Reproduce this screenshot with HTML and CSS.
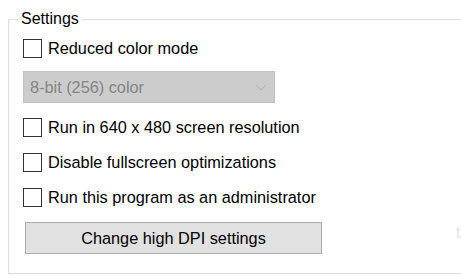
FILE: index.html
```html
<!DOCTYPE html>
<html lang="en">
<head>
    <meta charset="UTF-8">
    <meta name="viewport" content="width=device-width, initial-scale=1.0">
    <title>Compatibility Settings</title>
    <link rel="stylesheet" href="styles.css">
</head>
<body>

<fieldset class="group">
    <legend>Settings</legend>

    <!-- Reduced color -->
    <label class="row first">
        <span class="check"></span>
        <span>Reduced color mode</span>
    </label>

    <div class="combo">
        <span>8-bit (256) color</span>
        <svg class="chevron" width="12" height="7" viewBox="0 0 12 7">
            <polyline points="1,1 6,6 11,1" fill="none" stroke="#b4b4b4" stroke-width="1"/>
        </svg>
    </div>

    <!-- Other options -->
    <label class="row after-combo">
        <span class="check"></span>
        <span>Run in 640 x 480 screen resolution</span>
    </label>
    <label class="row">
        <span class="check"></span>
        <span>Disable fullscreen optimizations</span>
    </label>
    <label class="row">
        <span class="check"></span>
        <span>Run this program as an administrator</span>
    </label>

    <button class="btn">Change high DPI settings</button>
</fieldset>

<span class="cut">t</span>

</body>
</html>
```

FILE: styles.css
```css
html, body {
    margin: 0;
    padding: 0;
    background: #fff;
    overflow: hidden;
}
body {
    padding-top: 9px;
    font-family: "Liberation Sans", Arial, sans-serif;
    font-size: 16.3px;
    color: #000;
    position: relative;
    height: 276px;
    box-sizing: border-box;
}
.group {
    margin: 0 0 0 8px;
    padding: 10px 0 19px 14px;
    min-width: 0;
    border: 1px solid #dcdcdc;
    border-right: none;
    display: flex;
    flex-direction: column;
    align-items: flex-start;
}
.group legend {
    font-size: 16px;
    line-height: 20px;
    padding: 0 3px;
    margin-left: -5px;
}
.row {
    display: flex;
    align-items: center;
    gap: 6px;
    height: 19px;
    margin-top: 16px;
    white-space: nowrap;
}
.row.first {
    margin-top: 0;
}
.row.after-combo {
    margin-top: 15px;
}
.check {
    width: 17px;
    height: 17px;
    border: 1px solid #333;
    background: #fff;
}
.combo {
    margin-top: 13px;
    width: 237px;
    height: 30px;
    background: #cccccc;
    border: 1px solid #c2c2c2;
    color: #858585;
    display: flex;
    align-items: center;
    justify-content: space-between;
    padding: 0 7px 0 6px;
}
.btn {
    margin: 15px 0 0 2px;
    width: 297px;
    height: 32px;
    background: #e1e1e1;
    border: 1px solid #adadad;
    font-family: inherit;
    font-size: 16.3px;
    color: #000;
    padding: 0;
}
.cut {
    position: absolute;
    left: 456px;
    top: 224px;
    color: #e4e4e4;
    font-size: 16px;
}
```
